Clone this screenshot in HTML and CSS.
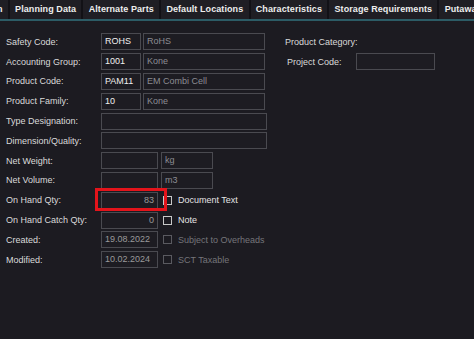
FILE: index.html
```html
<!doctype html>
<html lang="en">
<head>
    <meta charset="UTF-8">
    <title>Product - General</title>
    <link rel="stylesheet" href="styles.css">
</head>
<body>
    <div class="tabs">
        <div class="tab tab-first">n</div>
        <div class="tab">Planning Data</div>
        <div class="tab">Alternate Parts</div>
        <div class="tab">Default Locations</div>
        <div class="tab">Characteristics</div>
        <div class="tab">Storage Requirements</div>
        <div class="tab">Putaway</div>
    </div>

    <div id="content">
        <div class="form_left">
            <label>Safety Code:</label>
            <div class="fields">
                <div class="box code">ROHS</div>
                <div class="box desc">RoHS</div>
            </div>

            <label>Accounting Group:</label>
            <div class="fields">
                <div class="box code">1001</div>
                <div class="box desc">Kone</div>
            </div>

            <label>Product Code:</label>
            <div class="fields">
                <div class="box code">PAM11</div>
                <div class="box desc">EM Combi Cell</div>
            </div>

            <label>Product Family:</label>
            <div class="fields">
                <div class="box code">10</div>
                <div class="box desc">Kone</div>
            </div>

            <label>Type Designation:</label>
            <div class="fields">
                <div class="box wide"></div>
            </div>

            <label>Dimension/Quality:</label>
            <div class="fields">
                <div class="box wide"></div>
            </div>

            <label>Net Weight:</label>
            <div class="fields">
                <div class="box num"></div>
                <div class="box unit">kg</div>
            </div>

            <label>Net Volume:</label>
            <div class="fields">
                <div class="box num"></div>
                <div class="box unit">m3</div>
            </div>

            <label>On Hand Qty:</label>
            <div class="fields">
                <div class="highlight_wrap">
                    <div class="box num qty">83</div>
                    <span class="highlight"></span>
                </div>
                <span class="check"></span>
                <span class="check_label">Document Text</span>
            </div>

            <label>On Hand Catch Qty:</label>
            <div class="fields">
                <div class="box num qty">0</div>
                <span class="check"></span>
                <span class="check_label">Note</span>
            </div>

            <label>Created:</label>
            <div class="fields">
                <div class="box num date">19.08.2022</div>
                <span class="check disabled"></span>
                <span class="check_label disabled">Subject to Overheads</span>
            </div>

            <label>Modified:</label>
            <div class="fields">
                <div class="box num date">10.02.2024</div>
                <span class="check disabled"></span>
                <span class="check_label disabled">SCT Taxable</span>
            </div>
        </div>

        <div class="form_right">
            <div class="right_row">
                <label>Product Category:</label>
            </div>
            <div class="right_row project">
                <label>Project Code:</label>
                <div class="box project_box"></div>
            </div>
        </div>
    </div>
</body>
</html>
```

FILE: styles.css
```css
body {
    font-family: 'Liberation Sans', Arial, sans-serif;
    font-size: 9px;
    margin: 0;
    padding: 0;
    background: #1c1b21;
    color: #dcdcdc;
    height: 339px;
    overflow: hidden;
}

.tabs {
    display: flex;
    height: 19px;
    background: #121116;
    border-bottom: 2px solid #2c5c66;
    overflow: hidden;
    white-space: nowrap;
}

.tab {
    flex: none;
    line-height: 19px;
    padding: 0 5.25px;
    margin-right: 2px;
    background: #1f1e24;
    color: #eeeeee;
    font-weight: 700;
    letter-spacing: 0.08px;
}

.tab-first {
    margin-left: -3px;
    padding-left: 0;
}

#content {
    display: flex;
    padding-top: 11px;
}

.form_left {
    display: grid;
    grid-template-columns: 95px auto;
    grid-auto-rows: 19.8px;
    padding-left: 6px;
    width: 273px;
}

label {
    display: flex;
    align-items: center;
    color: #dadada;
}

.fields {
    display: flex;
    align-items: center;
    gap: 2px;
}

.box {
    box-sizing: border-box;
    height: 17px;
    line-height: 15px;
    border: 1px solid #4a4a50;
    background: #1d1c22;
    padding: 0 3px;
    white-space: nowrap;
    overflow: hidden;
}

.code {
    width: 40px;
    color: #f0f0f0;
}

.desc {
    width: 122px;
    color: #8c8c92;
}

.wide {
    width: 166px;
}

.num {
    width: 57px;
}

.unit {
    width: 52px;
    margin-left: 1px;
    color: #8c8c92;
}

.qty {
    text-align: right;
    color: #9a9a9a;
}

.date {
    color: #9a9a9a;
}

.highlight_wrap {
    position: relative;
    display: flex;
}

.highlight {
    position: absolute;
    left: -6px;
    right: -9px;
    top: -4px;
    bottom: -2px;
    border: 3px solid #e3141b;
}

.check {
    box-sizing: border-box;
    width: 9px;
    height: 9px;
    border: 1px solid #c8c8c8;
    margin-left: 3px;
}

.check.disabled {
    border-color: #5a5a60;
}

.check_label {
    margin-left: 4px;
    color: #e4e4e4;
}

.check_label.disabled {
    color: #75757a;
}

.form_right {
    display: flex;
    flex-direction: column;
    gap: 3px;
    padding-left: 6px;
    padding-top: 1px;
}

.right_row {
    display: flex;
    align-items: center;
    height: 17px;
}

.project {
    padding-left: 2px;
}

.project label {
    width: 69px;
}

.project_box {
    width: 79px;
}
```
